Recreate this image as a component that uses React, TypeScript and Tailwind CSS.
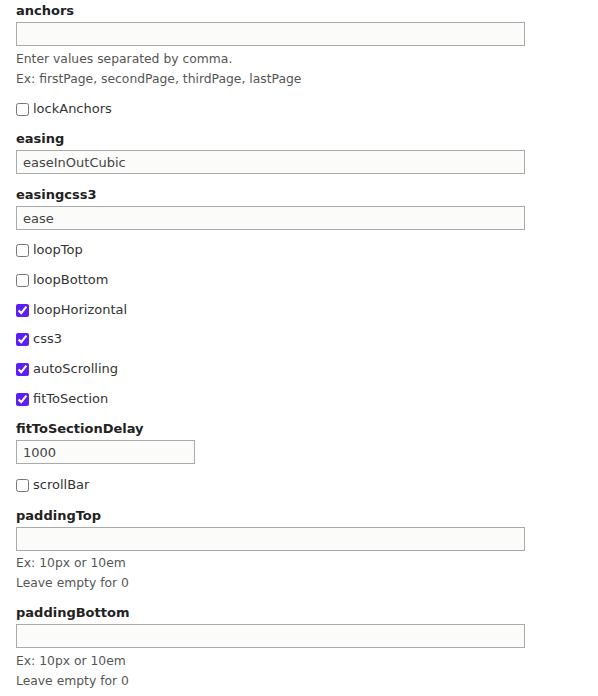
const font = { fontFamily: '"DejaVu Sans", sans-serif' };

function Label({ children, mt = "mt-[13px]" }: { children: React.ReactNode; mt?: string }) {
  return (
    <div className={`${mt} mb-1 font-bold text-[13px] leading-[15px] text-[#222]`}>
      {children}
    </div>
  );
}

function TextInput({ value = "", width = "w-[509px]" }: { value?: string; width?: string }) {
  return (
    <input
      type="text"
      defaultValue={value}
      className={`${width} block h-[24px] border border-[#aaaaaa] bg-[#fbfbfa] px-[6px] text-[13px] text-[#444] outline-none`}
    />
  );
}

function Help({ lines, mt = "mt-[3px]" }: { lines: string[]; mt?: string }) {
  return (
    <div className={`${mt} text-[12.35px] leading-5 text-[#555]`}>
      {lines.map((l) => (
        <div key={l}>{l}</div>
      ))}
    </div>
  );
}

function Check({ label, checked = false, mt = "mt-[10px]" }: { label: string; checked?: boolean; mt?: string }) {
  return (
    <label className={`${mt} flex h-5 items-center text-[13px] text-[#333]`}>
      <input
        type="checkbox"
        defaultChecked={checked}
        className="m-0 h-[13px] w-[13px] accent-[#5b1ff5]"
      />
      <span className="ml-[4px]">{label}</span>
    </label>
  );
}

export default function App() {
  return (
    <div className="min-h-[696px] bg-white px-4 pt-[3px]" style={font}>
      <Label mt="mt-0">anchors</Label>
      <TextInput />
      <Help lines={["Enter values separated by comma.", "Ex: firstPage, secondPage, thirdPage, lastPage"]} />
      <Check label="lockAnchors" />

      <Label mt="mt-[12px]">easing</Label>
      <TextInput value="easeInOutCubic" />

      <Label>easingcss3</Label>
      <TextInput value="ease" />

      <Check label="loopTop" />
      <Check label="loopBottom" />
      <Check label="loopHorizontal" checked />
      <Check label="css3" checked mt="mt-[9px]" />
      <Check label="autoScrolling" checked />
      <Check label="fitToSection" checked />

      <Label mt="mt-[12px]">fitToSectionDelay</Label>
      <TextInput value="1000" width="w-[179px]" />
      <Check label="scrollBar" mt="mt-[11px]" />

      <Label>paddingTop</Label>
      <TextInput />
      <Help lines={["Ex: 10px or 10em", "Leave empty for 0"]} mt="mt-[2px]" />

      <Label mt="mt-[12px]">paddingBottom</Label>
      <TextInput />
      <Help lines={["Ex: 10px or 10em", "Leave empty for 0"]} />
    </div>
  );
}
